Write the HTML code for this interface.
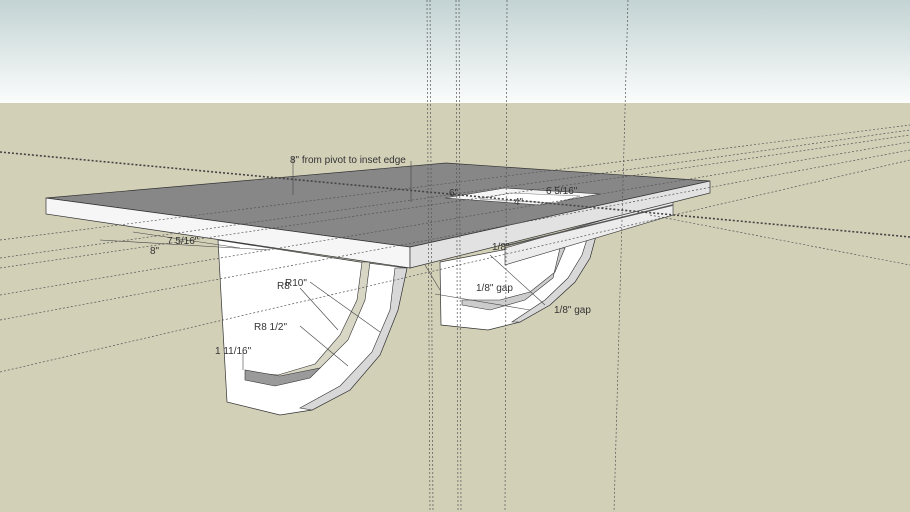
<!DOCTYPE html>
<html><head><meta charset="utf-8"><style>
html,body{margin:0;padding:0;width:910px;height:512px;overflow:hidden}
svg{display:block}
text{font-family:"Liberation Sans",sans-serif;font-size:10px;fill:#333}
</style></head><body>
<svg width="910" height="512" viewBox="0 0 910 512" xmlns="http://www.w3.org/2000/svg">
<defs><linearGradient id="sky" x1="0" y1="0" x2="0" y2="1">
<stop offset="0" stop-color="#c3d3d3"/><stop offset="1" stop-color="#fbfcfc"/></linearGradient></defs>
<rect width="910" height="103" fill="url(#sky)"/>
<rect y="103" width="910" height="409" fill="#d3d0b8"/>
<!-- left bracket -->
<polygon points="218,240 360,262 407,268 398,310 380,355 350,390 312,410 280,415 227,402" fill="#fff" stroke="#333" stroke-width="0.7"/>
<polygon points="395,268 407,268 398,310 380,355 350,390 312,410 300,408 340,386 372,352 390,310" fill="#d8d8d8" stroke="#333" stroke-width="0.6"/>
<path d="M362,262 L370,262 L365,300 L348,340 L320,368 L280,380 L248,378 L246,372 L278,375 L315,364 L340,335 L357,300 Z" fill="#d8d6c4" stroke="#333" stroke-width="0.6"/>
<path d="M245,370 L245,380 L275,386 L310,378 L320,368 L280,376 Z" fill="#9a9a9a" stroke="#333" stroke-width="0.6"/>
<!-- right bracket -->
<polygon points="440,262 597,232 590,258 575,282 550,305 520,322 488,330 441,325" fill="#fff" stroke="#333" stroke-width="0.7"/>
<polygon points="588,236 597,232 590,258 575,282 550,305 520,322 512,322 545,300 568,278 582,255" fill="#d8d8d8" stroke="#333" stroke-width="0.6"/>
<path d="M560,248 L565,248 L555,272 L530,292 L500,300 L462,300 L462,305 L490,310 L525,300 L553,278 Z" fill="#ccc" stroke="#333" stroke-width="0.6"/>
<!-- lower rail -->
<polygon points="505,248 673,200 673,215 505,265" fill="#ececec" stroke="#333" stroke-width="0.6"/>
<!-- slab -->
<polygon points="46,198 446,163 710,181 410,247" fill="#878787" stroke="#333" stroke-width="0.7"/>
<polygon points="46,198 410,247 410,268 46,214" fill="#f6f6f6" stroke="#333" stroke-width="0.7"/>
<polygon points="410,247 710,181 710,193 410,268" fill="#e2e2e2" stroke="#333" stroke-width="0.7"/>
<line x1="505" y1="246" x2="673" y2="205" stroke="#555" stroke-width="1.5"/>
<!-- hole -->
<polygon points="445,198 505,188 600,194 540,205" fill="#f4f4f4" stroke="#333" stroke-width="0.6"/>
<polygon points="480,199 510,193 580,196 555,203" fill="#fff" stroke="#555" stroke-width="0.4"/>
<g stroke="#555" stroke-width="0.7" stroke-dasharray="2,2" fill="none">
<line x1="0" y1="152" x2="910" y2="237" stroke-width="1.6" stroke="#444"/>
<line x1="0" y1="240" x2="910" y2="125"/>
<line x1="0" y1="258" x2="910" y2="130"/>
<line x1="0" y1="268" x2="910" y2="135"/>
<line x1="0" y1="295" x2="910" y2="142"/>
<line x1="0" y1="320" x2="910" y2="150"/>
<line x1="0" y1="372" x2="910" y2="160"/>
<line x1="650" y1="215" x2="910" y2="265"/>
<line x1="427" y1="0" x2="430" y2="512"/>
<line x1="430" y1="0" x2="433" y2="512"/>
<line x1="456" y1="0" x2="458" y2="512"/>
<line x1="459" y1="0" x2="461" y2="512"/>
<line x1="507" y1="0" x2="505" y2="512"/>
<line x1="628" y1="0" x2="614" y2="512"/>
</g>
<!-- dimension lines -->
<g stroke="#444" stroke-width="0.6" fill="none">
<line x1="293" y1="157" x2="293" y2="195"/>
<line x1="411" y1="161" x2="411" y2="202"/>
<line x1="100" y1="240" x2="270" y2="250"/>
<line x1="133" y1="232" x2="240" y2="248"/>
<line x1="310" y1="282" x2="380" y2="332"/>
<line x1="300" y1="288" x2="338" y2="330"/>
<line x1="300" y1="326" x2="348" y2="366"/>
<line x1="243" y1="350" x2="243" y2="370"/>
<line x1="425" y1="265" x2="440" y2="290"/>
<line x1="435" y1="294" x2="530" y2="310"/>
<line x1="490" y1="255" x2="545" y2="305"/>
</g>
<text x="290" y="163">8" from pivot to inset edge</text>
<text x="167" y="244">7 5/16"</text>
<text x="150" y="254">8"</text>
<text x="449" y="196">6"</text>
<text x="546" y="194">6 5/16"</text>
<text x="514" y="205">4"</text>
<text x="492" y="250">1/8"</text>
<text x="277" y="289">R8</text>
<text x="285" y="286">R10"</text>
<text x="254" y="330">R8 1/2"</text>
<text x="215" y="354">1 11/16"</text>
<text x="476" y="291">1/8" gap</text>
<text x="554" y="313">1/8" gap</text>
</svg>
</body></html>
